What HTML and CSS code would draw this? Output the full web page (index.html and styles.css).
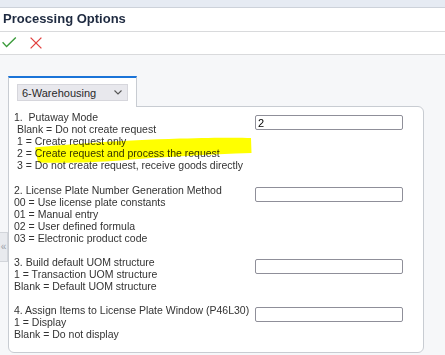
FILE: index.html
```html
<!DOCTYPE html>
<html>
<head>
<meta charset="utf-8">
<title>Processing Options</title>
<link rel="stylesheet" href="styles.css">
</head>
<body>
<div class="topstrip"></div>
<header class="header"><h1 class="title">Processing Options</h1></header>
<div class="toolbar">
  <svg class="ico ok" width="15" height="12" viewBox="0 0 15 12"><path d="M0.6 5.2 L4.6 9.6 L13.8 0.6" fill="none" stroke="#3a9b3a" stroke-width="1.4"/></svg>
  <svg class="ico cancel" width="12" height="12" viewBox="0 0 12 12"><path d="M0.6 0.6 L11.4 11.4 M11.4 0.6 L0.6 11.4" fill="none" stroke="#e2413f" stroke-width="1.3"/></svg>
</div>
<main class="content">
  <div class="tabs">
    <div class="tab">
      <div class="select"><span>6-Warehousing</span><svg class="chev" width="8" height="5" viewBox="0 0 8 5"><path d="M0.5 0.5 L4 4 L7.5 0.5" fill="none" stroke="#555" stroke-width="1.1"/></svg></div>
    </div>
  </div>
  <section class="panel">
    <svg class="highlight" width="260" height="70" viewBox="9 107 260 70"><path d="M35 147.5 C 70 144 120 140.5 180 138.5 C 215 137.5 240 137.5 251 138 L 251.5 153 C 210 154.5 160 157 120 160.5 C 95 162.5 70 163 38 162.5 Z" fill="#ffff00"/></svg>
    <div class="option">
      <div class="label">
        <div class="line">1.  Putaway Mode</div>
        <div class="line"> Blank = Do not create request</div>
        <div class="line"> 1 = Create request only</div>
        <div class="line"> 2 = Create request and process the request</div>
        <div class="line"> 3 = Do not create request, receive goods directly</div>
      </div>
      <input class="field first" type="text" value="2">
    </div>
    <div class="option">
      <div class="label">
        <div class="line">2. License Plate Number Generation Method</div>
        <div class="line">00 = Use license plate constants</div>
        <div class="line">01 = Manual entry</div>
        <div class="line">02 = User defined formula</div>
        <div class="line">03 = Electronic product code</div>
      </div>
      <input class="field" type="text" value="">
    </div>
    <div class="option">
      <div class="label">
        <div class="line">3. Build default UOM structure</div>
        <div class="line">1 = Transaction UOM structure</div>
        <div class="line">Blank = Default UOM structure</div>
      </div>
      <input class="field" type="text" value="">
    </div>
    <div class="option">
      <div class="label">
        <div class="line">4. Assign Items to License Plate Window (P46L30)</div>
        <div class="line">1 = Display</div>
        <div class="line">Blank = Do not display</div>
      </div>
      <input class="field" type="text" value="">
    </div>
  </section>
  <div class="collapse">«</div>
</main>
</body>
</html>
```
FILE: styles.css
```css
* { box-sizing: border-box; }
html, body { margin: 0; padding: 0; }
body {
  width: 445px;
  height: 355px;
  overflow: hidden;
  background: #f6f7f9;
  font-family: "Liberation Sans", Arial, sans-serif;
  color: #333;
}
.topstrip {
  height: 8px;
  background: #e6ebf3;
  border-bottom: 1px solid #cdd2da;
}
.header {
  height: 24px;
  background: #fff;
  border-bottom: 1px solid #d9dadc;
  padding-left: 3px;
}
.title {
  margin: 0;
  font-size: 13px;
  line-height: 21px;
  font-weight: bold;
  color: #1e2a40;
}
.toolbar {
  height: 23px;
  background: #fff;
  border-bottom: 1px solid #d9dadc;
  display: flex;
  align-items: flex-start;
  padding: 5px 0 0 2px;
}
.ico { display: block; }
.ok { margin-right: 13px; margin-top: 0; }
.cancel { margin-top: 0; }
.content {
  position: relative;
  padding: 21px 0 0 8px;
}
.tabs { display: flex; }
.tab {
  position: relative;
  z-index: 1;
  width: 129px;
  height: 31px;
  margin-bottom: -1px;
  background: #fff;
  border-top: 2px solid #1b74d8;
  border-left: 1px solid #c8ccd2;
  border-right: 1px solid #c8ccd2;
  padding: 6px 0 0 8px;
}
.select {
  width: 111px;
  height: 17px;
  background: #e8e8ed;
  border: 1px solid #d6d6dc;
  display: flex;
  align-items: center;
  justify-content: space-between;
  padding: 0 5px 0 4px;
  font-size: 11px;
  color: #2a2a2a;
}
.chev { display: block; }
.panel {
  position: relative;
  width: 416px;
  height: 247px;
  background: #fff;
  border: 1px solid #c8ccd2;
  border-radius: 0 6px 6px 6px;
  padding: 4px 0 0 5px;
  display: flex;
  flex-direction: column;
  gap: 12px;
}
.highlight {
  position: absolute;
  left: 0;
  top: 0;
  mix-blend-mode: multiply;
  pointer-events: none;
}
.option {
  display: grid;
  grid-template-columns: 241px 148px;
  align-items: start;
}
.option:first-of-type { margin-bottom: 1px; }
.label {
  font-size: 10.5px;
  line-height: 12px;
}
.line { white-space: pre; }
.field {
  margin: 3px 0 0 0;
  width: 148px;
  height: 15px;
  border: 1px solid #8f8f99;
  border-radius: 2px;
  padding: 0 2px;
  font-family: "Liberation Sans", Arial, sans-serif;
  font-size: 11px;
  color: #000;
  background: #fff;
}
.field.first { margin-top: 4px; }
.collapse {
  position: absolute;
  left: 0;
  top: 177px;
  width: 8px;
  height: 30px;
  background: #e8eaee;
  border: 1px solid #d2d5da;
  border-left: none;
  color: #9aa0a8;
  font-size: 10px;
  line-height: 28px;
  text-align: center;
}
```
